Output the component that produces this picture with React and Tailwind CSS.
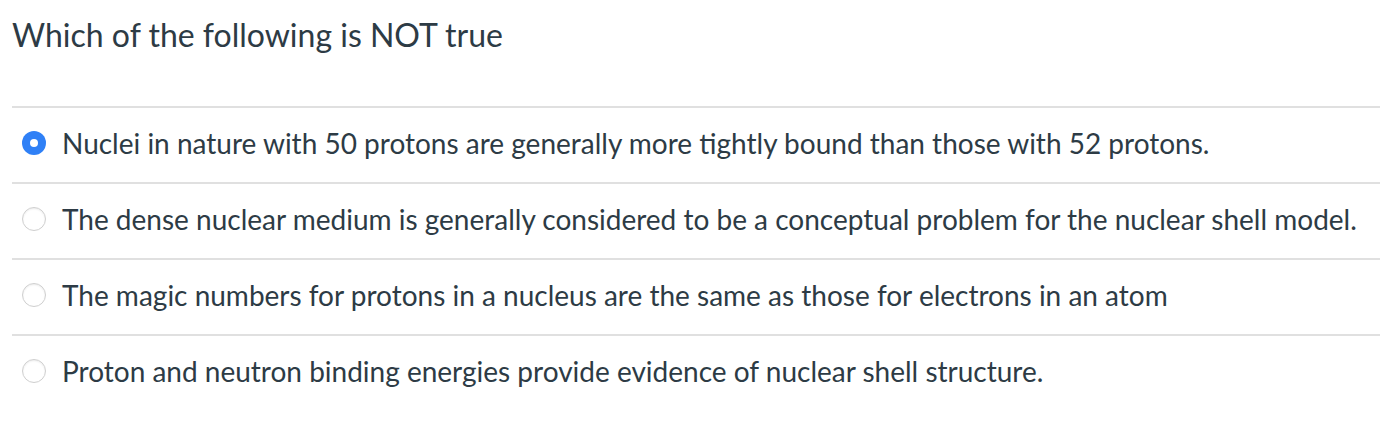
import React from "react";

const answers = [
  { text: "Nuclei in nature with 50 protons are generally more tightly bound than those with 52 protons.", selected: true },
  { text: "The dense nuclear medium is generally considered to be a conceptual problem for the nuclear shell model.", selected: false },
  { text: "The magic numbers for protons in a nucleus are the same as those for electrons in an atom", selected: false },
  { text: "Proton and neutron binding energies provide evidence of nuclear shell structure.", selected: false },
];

const Radio = ({ checked }) => {
  if (checked) {
    return (
      <span className="flex h-[24px] w-[24px] shrink-0 items-center justify-center rounded-full bg-[#2f80f6]">
        <span className="h-[8px] w-[8px] rounded-full bg-white" />
      </span>
    );
  }
  return (
    <span className="h-[24px] w-[24px] shrink-0 rounded-full border border-[#cfcfcf] bg-white shadow-[inset_0_1px_2px_rgba(0,0,0,0.08)]" />
  );
};

export default function App() {
  return (
    <div className="min-h-screen bg-white pl-3 pr-4 font-['Lato','Liberation_Sans',sans-serif] text-[#2d3b45]">
      <h1 className="flex h-[70px] items-center text-[32px] leading-none">Which of the following is NOT true</h1>
      <div className="mt-[36px]">
        {answers.map((a, i) => (
          <div key={i} className="flex h-[76px] items-center gap-[16px] border-t-2 border-[#e0e0e0] pb-[4px] pl-[10px]">
            <Radio checked={a.selected} />
            <span className="text-[28px] leading-none">{a.text}</span>
          </div>
        ))}
      </div>
    </div>
  );
}
